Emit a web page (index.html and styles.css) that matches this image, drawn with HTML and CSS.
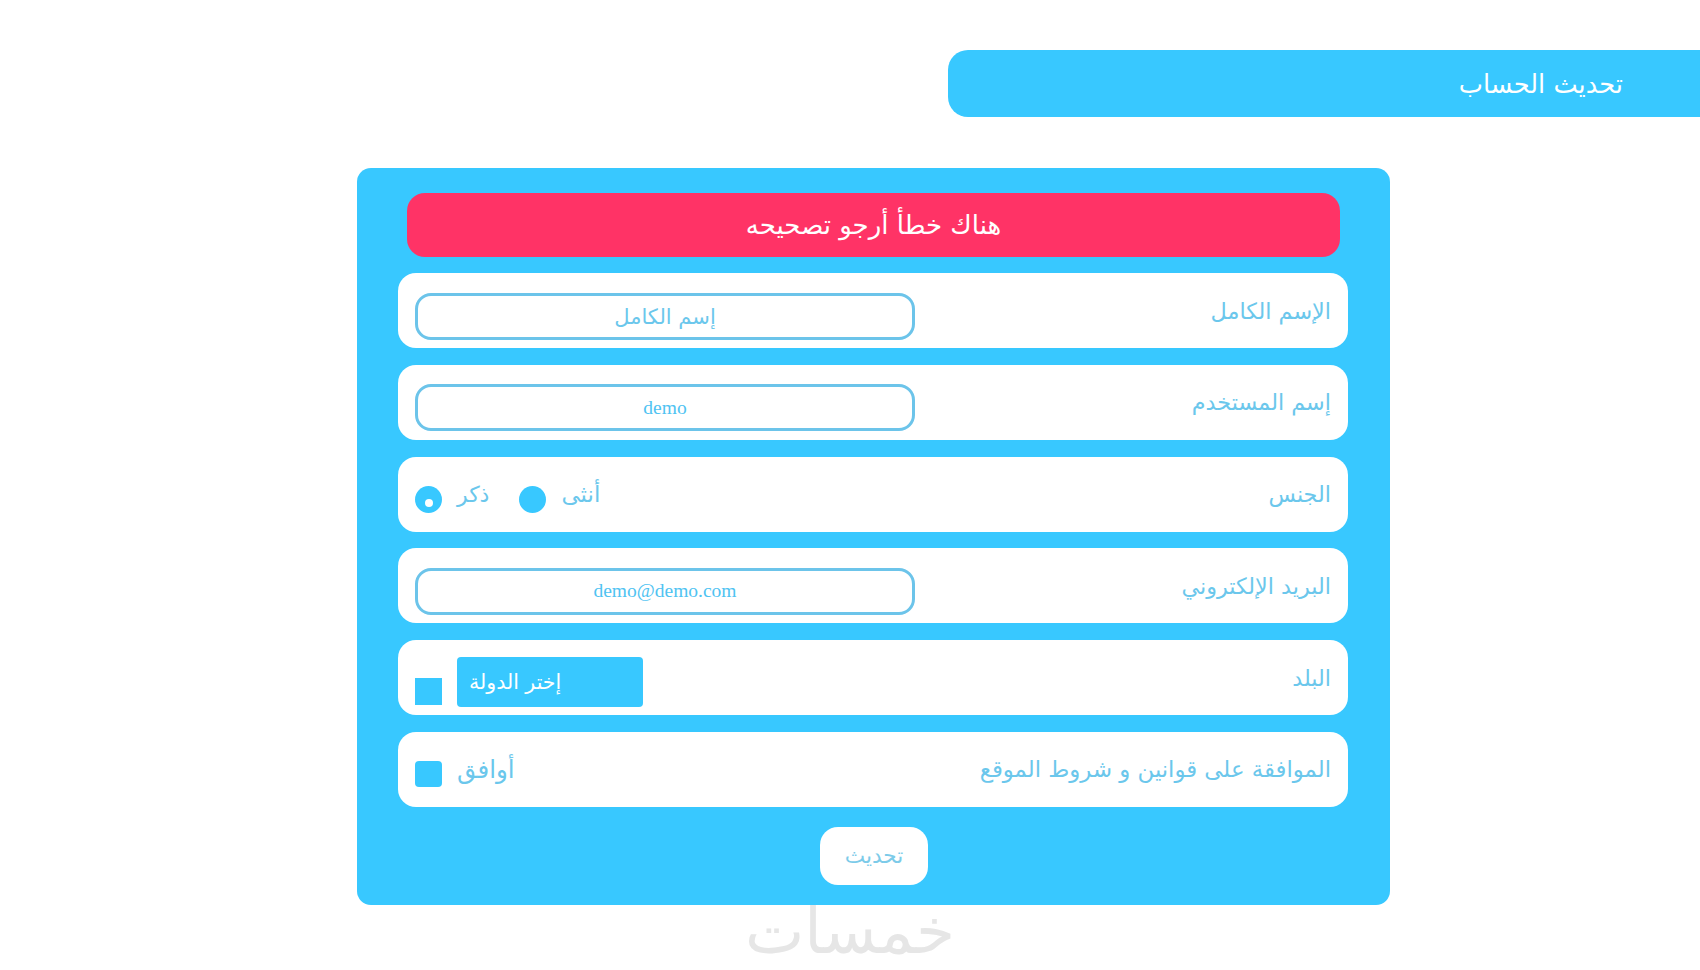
FILE: index.html
```html
<!DOCTYPE html>
<html lang="ar" dir="rtl">
<head>
<meta charset="utf-8">
<title>تحديث الحساب</title>
<link rel="stylesheet" href="styles.css">
</head>
<body>
<header class="page-title"><h1>تحديث الحساب</h1></header>
<main class="panel">
  <div class="alert">هناك خطأ أرجو تصحيحه</div>
  <form class="rows">
    <div class="row">
      <label class="label">الإسم الكامل</label>
      <input class="field field-empty" type="text" placeholder="إسم الكامل">
    </div>
    <div class="row">
      <label class="label">إسم المستخدم</label>
      <input class="field" type="text" value="demo">
    </div>
    <div class="row">
      <span class="label">الجنس</span>
      <div class="choices">
        <span class="label">أنثى</span><span class="radio"></span>
        <span class="label second">ذكر</span><span class="radio checked"></span>
      </div>
    </div>
    <div class="row">
      <label class="label">البريد الإلكتروني</label>
      <input class="field" type="text" value="demo@demo.com">
    </div>
    <div class="row">
      <label class="label">البلد</label>
      <div class="country">
        <div class="select">إختر الدولة</div><span class="arrow"></span>
      </div>
    </div>
    <div class="row">
      <label class="label long">الموافقة على قوانين و شروط الموقع</label>
      <div class="agree">
        <span class="label agree-text">أوافق</span><span class="check"></span>
      </div>
    </div>
    <div class="actions"><button class="submit" type="button">تحديث</button></div>
  </form>
</main>
<div class="watermark">خمسات</div>
</body>
</html>
```
FILE: styles.css
```css
* { box-sizing: border-box; }
html, body { margin: 0; padding: 0; height: 970px; overflow: hidden; background: #fff; }
body { font-family: "DejaVu Sans", sans-serif; color: #5fc5ee; }

.page-title {
  margin: 50px 0 0 0;
  width: 752px;
  height: 67px;
  background: #38c8ff;
  border-top-left-radius: 20px;
  border-bottom-left-radius: 20px;
  display: flex;
  align-items: center;
  padding-right: 77px;
}
.page-title h1 { margin: 0; font-size: 25.7px; font-weight: normal; color: #fff; }

.panel {
  margin: 51px 310px 0 0;
  width: 1033px;
  height: 737px;
  background: #38c8ff;
  border-radius: 14px;
  padding: 25px 42px 20px 41px;
}
.alert {
  margin: 0 8px 16px 9px;
  height: 64px;
  background: #ff3366;
  border-radius: 18px;
  color: #fff;
  font-size: 26px;
  display: flex;
  align-items: center;
  justify-content: center;
}
.rows { display: flex; flex-direction: column; gap: 16.8px; }
.row {
  height: 75px;
  background: #fff;
  border-radius: 18px;
  padding: 0 17px;
  display: flex;
  align-items: center;
  justify-content: space-between;
}
.label { font-size: 22.3px; color: #6bc7ec; white-space: nowrap; }
.long { font-size: 22.8px; }

.field {
  width: 500px;
  height: 47px;
  margin-top: 11px;
  border: 3px solid #6cc4ea;
  border-radius: 16px;
  background: #fff;
  text-align: center;
  font-family: "Liberation Serif", serif;
  font-size: 19.5px;
  color: #4fc3f2;
  outline: none;
}
.field-empty { padding-top: 5px; }
.field::placeholder { font-family: "DejaVu Sans", sans-serif; color: #6bc7ec; opacity: 1; font-size: 21px; }

.choices { display: flex; align-items: center; }
.choices .label { margin-left: 15px; font-size: 23px; }
.choices .second { margin-right: 30px; font-size: 22px; }
.radio {
  width: 27px;
  height: 27px;
  border-radius: 50%;
  background: #38c8ff;
  margin-top: 11px;
  display: flex;
  align-items: center;
  justify-content: center;
}
.radio.checked::after {
  content: "";
  width: 8px;
  height: 8px;
  border-radius: 50%;
  background: #fff;
  margin-top: 6px;
}

.country { display: flex; align-items: flex-end; gap: 15px; margin-top: 9px; }
.select {
  width: 186px;
  height: 50px;
  background: #38c8ff;
  border-radius: 4px;
  color: #fff;
  font-size: 20.5px;
  display: flex;
  align-items: center;
  justify-content: flex-end;
  padding-left: 12px;
}
.arrow { width: 27px; height: 27px; background: #38c8ff; margin-bottom: 2px; }

.agree { display: flex; align-items: center; gap: 15px; }
.agree-text { font-size: 24.5px; }
.check { width: 27px; height: 26px; border-radius: 4px; background: #38c8ff; margin-top: 10px; }

.actions { display: flex; justify-content: center; margin-top: 3.2px; }
.submit {
  width: 108px;
  height: 58px;
  margin-left: 2px;
  border: 0;
  border-radius: 18px;
  background: #fff;
  color: #7ccbe9;
  font-family: "DejaVu Sans", sans-serif;
  font-size: 21.6px;
}

.watermark {
  width: 204px;
  margin: 0 745px 0 0;
  height: 65px;
  font-size: 63px;
  line-height: 54px;
  color: #e6e6e6;
  text-align: center;
  white-space: nowrap;
}
```
